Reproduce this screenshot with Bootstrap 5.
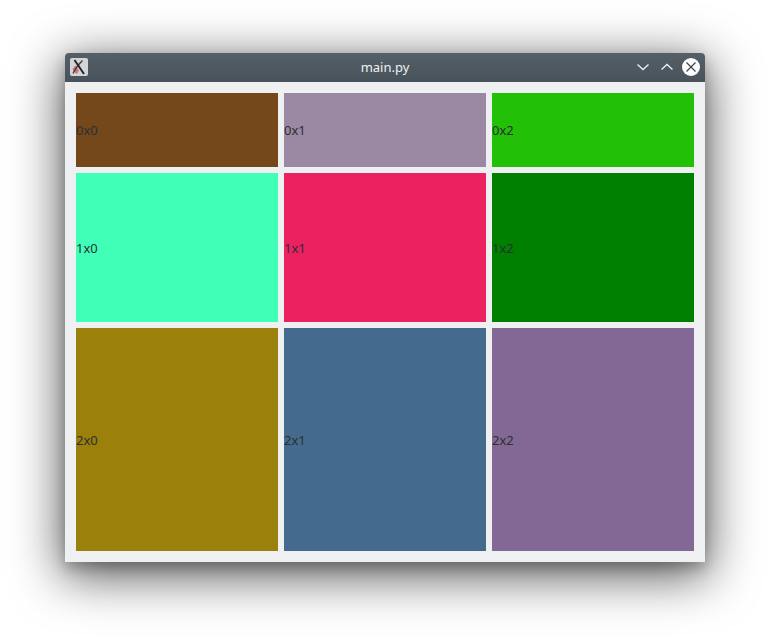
<!DOCTYPE html>
<html lang="en">
<head>
<meta charset="utf-8">
<title>main.py</title>
<link rel="stylesheet" href="https://cdn.jsdelivr.net/npm/bootstrap@5.3.0/dist/css/bootstrap.min.css">
<style>
html,body{height:100%;background:#fff;overflow:hidden}
body{padding:53px 65px 0;font-family:"Noto Sans",sans-serif;font-size:13px}
.appwin{width:640px;height:509px;background:#eff0f1;box-shadow:0 11px 50px 3px rgba(0,0,0,.66),0 6px 14px rgba(0,0,0,.22);border-radius:4px 4px 0 0}
.winbar{height:29px;flex:none;background:linear-gradient(#555f68,#47525a);border-radius:4px 4px 0 0;color:#eff0f1;padding:0 5px 1px}
.winbar-title{left:0;right:0;top:0;line-height:29px;text-align:center}
.appicon{width:18px;height:18px;background:#d3d6d8;border-radius:2px}
.winbtn{width:18px;height:18px}
.winbtn-set{column-gap:6px}
.winbtn-close{background:#fcfcfc;border-radius:50%}
.cellgrid{display:grid;grid-template-columns:repeat(3,202px);grid-template-rows:74px 149px 223px;gap:6px;padding:11px}
.cellbox{color:#2d2f32;line-height:18px}
</style>
</head>
<body>
<div class="appwin d-flex flex-column">
  <div class="winbar d-flex align-items-center position-relative">
    <div class="appicon d-flex align-items-center justify-content-center">
      <svg width="18" height="18" viewBox="0 0 18 18"><path d="M2.500 11c.8 2.200 2.200 4 4.500 5l2-3.500-3.500-5z" fill="#d9736f"/><path d="M3 15.500c1.800-4 4.700-8.500 9.500-13" stroke="#444" stroke-width="1.400" fill="none"/><path d="M4.500 2l9.500 14" stroke="#262626" stroke-width="2" fill="none"/></svg>
    </div>
    <div class="winbar-title position-absolute">main.py</div>
    <div class="winbtn-set ms-auto d-flex align-items-center">
      <svg class="winbtn" viewBox="0 0 18 18"><path d="M3.500 6.500L9 11.500l5.500-5" fill="none" stroke="#eff0f1" stroke-width="1.300"/></svg>
      <svg class="winbtn" viewBox="0 0 18 18"><path d="M3.500 11.500L9 6.500l5.500 5" fill="none" stroke="#eff0f1" stroke-width="1.300"/></svg>
      <svg class="winbtn winbtn-close" viewBox="0 0 18 18"><path d="M4.500 4.500l9 9M13.500 4.500l-9 9" fill="none" stroke="#3b444b" stroke-width="1.200"/></svg>
    </div>
  </div>
  <div class="cellgrid">
    <div class="cellbox d-flex align-items-center" style="background:#74481a">0x0</div>
    <div class="cellbox d-flex align-items-center" style="background:#9b88a2">0x1</div>
    <div class="cellbox d-flex align-items-center" style="background:#22c007">0x2</div>
    <div class="cellbox d-flex align-items-center" style="background:#40ffb7">1x0</div>
    <div class="cellbox d-flex align-items-center" style="background:#ec2160">1x1</div>
    <div class="cellbox d-flex align-items-center" style="background:#008000">1x2</div>
    <div class="cellbox d-flex align-items-center" style="background:#9b800b">2x0</div>
    <div class="cellbox d-flex align-items-center" style="background:#446a8d">2x1</div>
    <div class="cellbox d-flex align-items-center" style="background:#836895">2x2</div>
  </div>
</div>
<script src="https://cdn.jsdelivr.net/npm/bootstrap@5.3.0/dist/js/bootstrap.bundle.min.js"></script>
</body>
</html>
